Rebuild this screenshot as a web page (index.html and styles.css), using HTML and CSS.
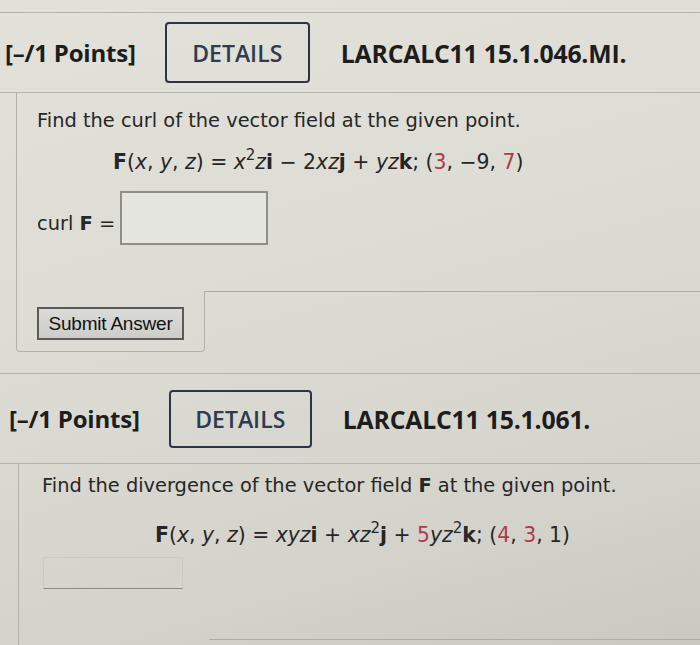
FILE: index.html
```html
<!DOCTYPE html>
<html lang="en">
<head>
<meta charset="utf-8">
<title>WebAssign questions</title>
<link rel="stylesheet" href="styles.css">
</head>
<body>
<div class="page">
  <section class="question q1">
    <header class="qhead">
      <span class="points">[–/1 Points]</span>
      <button class="details">DETAILS</button>
      <span class="code">LARCALC11 15.1.046.MI.</span>
    </header>
    <div class="qbody">
      <div class="qcontent">
        <p class="prompt">Find the curl of the vector field at the given point.</p>
        <p class="formula"><b>F</b>(<i>x</i>, <i>y</i>, <i>z</i>) = <i>x</i><sup>2</sup><i>z</i><b>i</b> − 2<i>xz</i><b>j</b> + <i>yz</i><b>k</b>; (<span class="red">3</span>, −9, <span class="red">7</span>)</p>
        <div class="answer-row">
          <span class="label">curl <b>F</b> =</span>
          <span class="input"></span>
        </div>
      </div>
      <div class="bottom">
        <div class="submit-cell"><button class="submit">Submit Answer</button></div>
        <div class="side-box"></div>
      </div>
    </div>
  </section>

  <section class="question q2">
    <header class="qhead">
      <span class="points">[–/1 Points]</span>
      <button class="details">DETAILS</button>
      <span class="code">LARCALC11 15.1.061.</span>
    </header>
    <div class="qbody">
      <div class="qcontent">
        <p class="prompt">Find the divergence of the vector field <b>F</b> at the given point.</p>
        <p class="formula"><b>F</b>(<i>x</i>, <i>y</i>, <i>z</i>) = <i>xyz</i><b>i</b> + <i>xz</i><sup>2</sup><b>j</b> + <span class="red">5</span><i>yz</i><sup>2</sup><b>k</b>; (<span class="red">4</span>, <span class="red">3</span>, 1)</p>
        <div class="answer-row">
          <span class="input faint"></span>
        </div>
      </div>
      <div class="bottom">
        <div class="submit-cell empty"></div>
        <div class="side-box"></div>
      </div>
    </div>
  </section>
</div>
</body>
</html>
```
FILE: styles.css
```css
* { box-sizing: border-box; }

html, body {
  margin: 0;
  width: 700px;
  height: 645px;
  overflow: hidden;
}

body {
  background: linear-gradient(165deg, #e2e2db 0%, #dcdcd4 45%, #d3d3cb 80%, #c9c9c1 100%);
  font-family: "DejaVu Sans", Verdana, sans-serif;
  color: #262626;
}

.page {
  padding-top: 12px;
}

.qhead {
  display: flex;
  align-items: center;
  gap: 29px;
  height: 81px;
  padding-left: 5px;
  border-top: 1px solid #b4b4ac;
  border-bottom: 1px solid #b4b4ac;
  font-family: "Open Sans", sans-serif;
}

.q2 .qhead {
  height: 91px;
  padding-left: 9px;
}

.points,
.code {
  font-weight: 700;
  font-size: 24px;
  color: #1d1d1d;
  letter-spacing: -0.2px;
}

.code {
  font-size: 24.8px;
}

.details {
  width: 145px;
  height: 61px;
  margin-right: 2px;
  border: 2px solid #2b3546;
  border-radius: 4px;
  background: transparent;
  font-family: "Open Sans", sans-serif;
  font-weight: 600;
  font-size: 23px;
  color: #2c3b50;
  padding: 0;
}

.q2 .details {
  width: 143px;
  height: 58px;
}

.qbody {
  margin-left: 16px;
  padding-bottom: 21px;
}

.q2 .qbody {
  margin-left: 18px;
  padding-bottom: 0;
}

.qcontent {
  border-left: 1px solid #b2b2aa;
  padding: 16px 0 46px 20px;
}

.q2 .qcontent {
  padding: 10px 0 50px 23px;
}

.prompt,
.formula {
  margin: 0;
  font-size: 19.4px;
  line-height: 24px;
}

.formula {
  font-size: 20.4px;
  margin-top: 17px;
  margin-left: 76px;
}

.q2 .formula {
  margin-top: 25px;
  margin-left: 113px;
}

.formula sup {
  font-size: 15px;
  line-height: 0;
  vertical-align: 9px;
}

.red {
  color: #b0394a;
}

.answer-row {
  display: flex;
  align-items: center;
  gap: 5px;
  margin-top: 17px;
}

.q2 .answer-row {
  margin-top: 10px;
  padding-left: 1px;
}

.label {
  font-size: 19.4px;
  padding-top: 10px;
}

.input {
  width: 148px;
  height: 54px;
  border: 2px solid #8f8f8a;
  background: #e6e6e0;
}

.input.faint {
  width: 140px;
  height: 32px;
  border: 1px solid #cbcbc4;
  border-bottom-color: #8a8a85;
  background: transparent;
}

.bottom {
  display: flex;
}

.submit-cell {
  width: 189px;
  padding: 16px 0 11px 20px;
  border-left: 1px solid #b2b2aa;
  border-right: 1px solid #b2b2aa;
  border-bottom: 1px solid #b2b2aa;
  border-radius: 0 0 4px 4px;
}

.submit-cell.empty {
  width: 191px;
  height: 20px;
  padding: 0;
  border-bottom: none;
  border-right: none;
}

.side-box {
  flex: 1;
  border-top: 1px solid #adada5;
}

.submit {
  display: block;
  width: 147px;
  height: 33px;
  padding: 0;
  border: 2px solid #5a5a58;
  background: linear-gradient(#dadad7, #cdcdca);
  font-family: "Liberation Sans", Arial, sans-serif;
  font-size: 19px;
  letter-spacing: -0.2px;
  color: #111;
}
```
